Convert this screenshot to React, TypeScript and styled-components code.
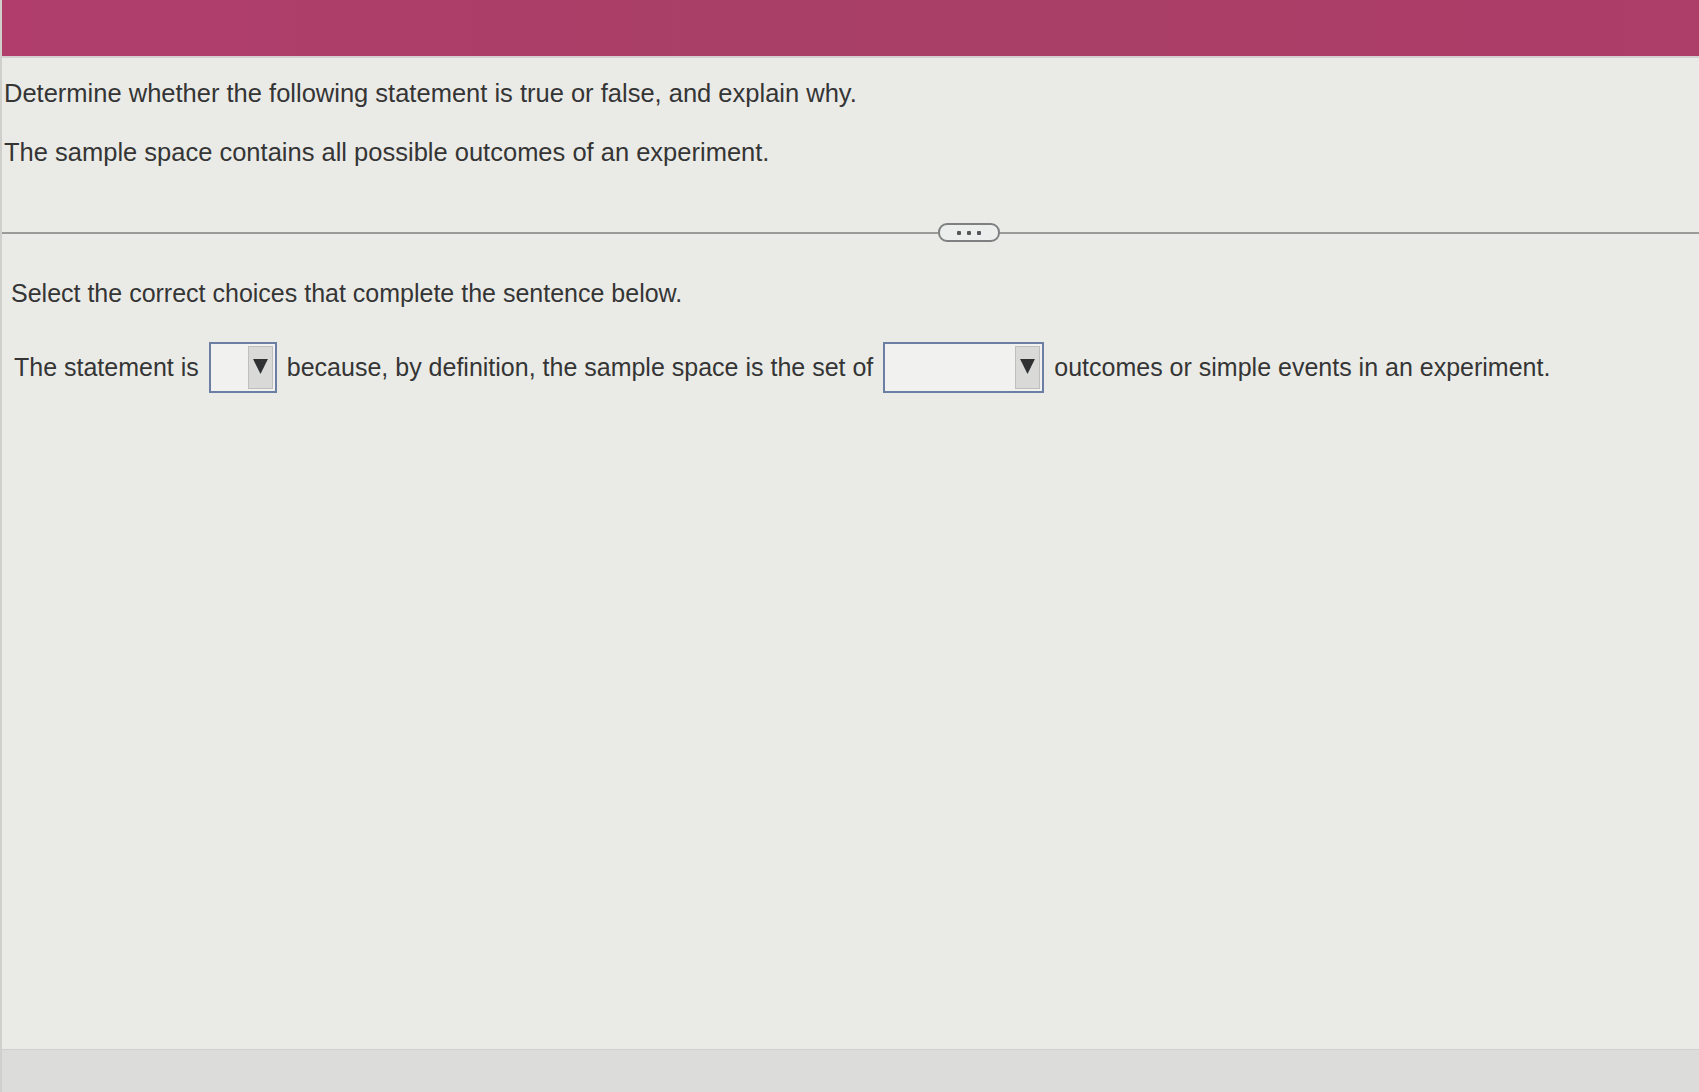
import React from "react";
import styled, { createGlobalStyle } from "styled-components";

const Global = createGlobalStyle`
  html, body { margin: 0; padding: 0; }
  body {
    background: #e9eae6;
    font-family: "Liberation Sans", Arial, sans-serif;
    color: #353535;
  }
`;

const Page = styled.div`
  width: 1699px;
  height: 1092px;
  display: flex;
  flex-direction: column;
  overflow: hidden;
  background: #e9eae6;
  border-left: 2px solid #cfd0cc;
  box-sizing: border-box;
`;

const Header = styled.header`
  height: 56px;
  flex: none;
  background: linear-gradient(90deg, #b03d6c 0%, #a83f66 50%, #ad3d69 100%);
  border-bottom: 2px solid #d6cfd2;
`;

const Main = styled.main`
  flex: 1;
  display: flex;
  flex-direction: column;
  background: #eaebe7;
`;

const Question = styled.section`
  padding: 21px 0 0 2px;
  display: flex;
  flex-direction: column;
  gap: 30px;
`;

const Text = styled.p<{ $size?: number }>`
  margin: 0;
  font-size: ${(p) => p.$size ?? 25.5}px;
  line-height: 29px;
  white-space: nowrap;
`;

const Divider = styled.div`
  margin-top: 56px;
  display: flex;
  align-items: center;
`;

const LeftRule = styled.div`
  width: 936px;
  flex: none;
  height: 2px;
  background: #9a9b99;
`;

const Rule = styled.div`
  flex: 1;
  height: 2px;
  background: #9a9b99;
`;

const Pill = styled.div`
  width: 58px;
  height: 15px;
  border: 2px solid #7f8082;
  border-radius: 9px;
  display: flex;
  align-items: center;
  justify-content: center;
  gap: 6px;
  background: #eceded;
`;

const Dot = styled.span`
  width: 4px;
  height: 4px;
  background: #55575a;
  border-radius: 1px;
`;

const Answer = styled.section`
  padding: 37px 0 0 9px;
  display: flex;
  flex-direction: column;
  gap: 34px;
`;

const Sentence = styled.div`
  display: flex;
  align-items: center;
  gap: 10px;
  padding-left: 3px;
  font-size: 25px;
  white-space: nowrap;
`;

const Select = styled.div<{ $w: number }>`
  width: ${(p) => p.$w}px;
  height: 51px;
  box-sizing: border-box;
  border: 2px solid #6c7ea4;
  background: #f1f2f0;
  display: flex;
  justify-content: flex-end;
  padding: 2px;
`;

const Arrow = styled.div`
  width: 25px;
  background: #d9dad8;
  border: 1px solid #bfc0be;
  display: flex;
  align-items: flex-start;
  justify-content: center;
  padding-top: 11px;
  box-sizing: border-box;
`;

const Bottom = styled.div`
  height: 42px;
  flex: none;
  background: #dcdddb;
  border-top: 1px solid #d0d1cf;
`;

function Drop({ w }: { w: number }) {
  return (
    <Select $w={w}>
      <Arrow>
        <svg width="17" height="17" viewBox="0 0 16 16">
          <polygon points="1,1 15,1 8,15" fill="#2f3133" />
        </svg>
      </Arrow>
    </Select>
  );
}

export default function App() {
  return (
    <>
      <Global />
      <Page>
        <Header />
        <Main>
          <Question>
            <Text>Determine whether the following statement is true or false, and explain why.</Text>
            <Text>The sample space contains all possible outcomes of an experiment.</Text>
          </Question>
          <Divider>
            <LeftRule />
            <Pill>
              <Dot />
              <Dot />
              <Dot />
            </Pill>
            <Rule />
          </Divider>
          <Answer>
            <Text $size={25}>Select the correct choices that complete the sentence below.</Text>
            <Sentence>
              <span>The statement is</span>
              <Drop w={68} />
              <span>because, by definition, the sample space is the set of</span>
              <Drop w={161} />
              <span>outcomes or simple events in an experiment.</span>
            </Sentence>
          </Answer>
        </Main>
        <Bottom />
      </Page>
    </>
  );
}
